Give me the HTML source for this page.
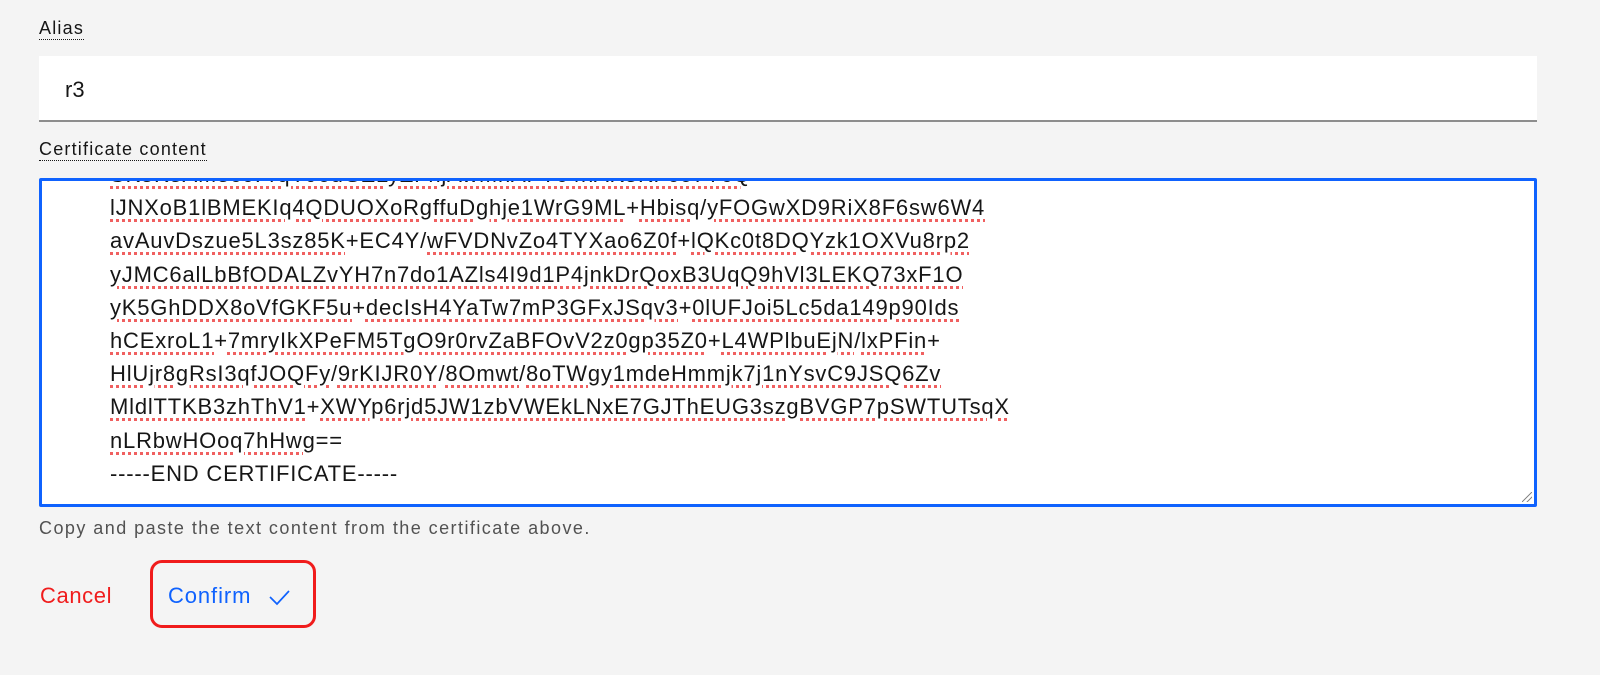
<!DOCTYPE html>
<html><head><meta charset="utf-8"><style>
body{margin:0;width:1600px;height:675px;background:#f4f4f4;font-family:"Liberation Sans",sans-serif;position:relative;overflow:hidden}
.lbl{position:absolute;left:39px;font-size:18px;color:#161616;border-bottom:1px dotted #161616;line-height:22px;letter-spacing:1.2px}
.inp{position:absolute;left:39px;top:56px;width:1498px;height:64px;background:#fff;border-bottom:2px solid #8d8d8d}
.inp span{position:absolute;left:26px;top:21px;font-size:22px;color:#161616}
.ta{position:absolute;left:39px;top:178px;width:1492px;height:323px;background:#fff;border:3px solid #0f62fe;border-radius:2px;overflow:hidden}
.txt{position:absolute;left:68px;top:-23px;font-size:22px;line-height:33.2px;color:#161616;white-space:pre;letter-spacing:0.8px}
.txt u{text-decoration:underline dotted #f06060;text-decoration-thickness:3px;text-underline-offset:4px}
.grip{position:absolute;right:2px;bottom:2px;width:10px;height:10px;background:linear-gradient(135deg,transparent 45%,#888 47%,#888 53%,transparent 55%,transparent 70%,#888 72%,#888 78%,transparent 80%)}
.help{position:absolute;left:39px;top:518px;font-size:18px;color:#525252;letter-spacing:1.45px}
.cancel{position:absolute;left:40px;top:583px;font-size:22px;color:#f01c1c;letter-spacing:0.6px}
.conf{position:absolute;left:150px;top:560px;width:166px;height:68px;border:3px solid #f01c1c;border-radius:12px;box-sizing:border-box}
.conf span{position:absolute;left:15px;top:20px;font-size:22px;color:#0f62fe;letter-spacing:0.9px}
.conf svg{position:absolute;left:115px;top:26px}
</style></head><body>
<div class="lbl" style="top:17px">Alias</div>
<div class="inp"><span>r3</span></div>
<div class="lbl" style="top:138px">Certificate content</div>
<div class="ta"><div class="txt"><u>SK5K5AM5c0FrqYJ6dGZLyZFnjAwMhAFYc4hAK5KFc67YcQ</u>
<u>lJNXoB1lBMEKIq4QDUOXoRgffuDghje1WrG9ML</u>+<u>Hbisq</u>/<u>yFOGwXD9RiX8F6sw6W4</u>
<u>avAuvDszue5L3sz85K</u>+EC4Y/<u>wFVDNvZo4TYXao6Z0f</u>+<u>lQKc0t8DQYzk1OXVu8rp2</u>
<u>yJMC6alLbBfODALZvYH7n7do1AZls4I9d1P4jnkDrQoxB3UqQ9hVl3LEKQ73xF1O</u>
<u>yK5GhDDX8oVfGKF5u</u>+<u>decIsH4YaTw7mP3GFxJSqv3</u>+<u>0lUFJoi5Lc5da149p90Ids</u>
<u>hCExroL1</u>+<u>7mryIkXPeFM5TgO9r0rvZaBFOvV2z0gp35Z0</u>+<u>L4WPlbuEjN</u>/<u>lxPFin</u>+
<u>HlUjr8gRsI3qfJOQFy</u>/<u>9rKIJR0Y</u>/<u>8Omwt</u>/<u>8oTWgy1mdeHmmjk7j1nYsvC9JSQ6Zv</u>
<u>MldlTTKB3zhThV1</u>+<u>XWYp6rjd5JW1zbVWEkLNxE7GJThEUG3szgBVGP7pSWTUTsqX</u>
<u>nLRbwHOoq7hHwg</u>==
-----END CERTIFICATE-----</div><div class="grip"></div></div>
<div class="help">Copy and paste the text content from the certificate above.</div>
<div class="cancel">Cancel</div>
<div class="conf"><span>Confirm</span><svg width="24" height="18" viewBox="0 0 24 18"><path d="M2 8 L9 15 L21 2" fill="none" stroke="#0f62fe" stroke-width="1.7"/></svg></div>
</body></html>
